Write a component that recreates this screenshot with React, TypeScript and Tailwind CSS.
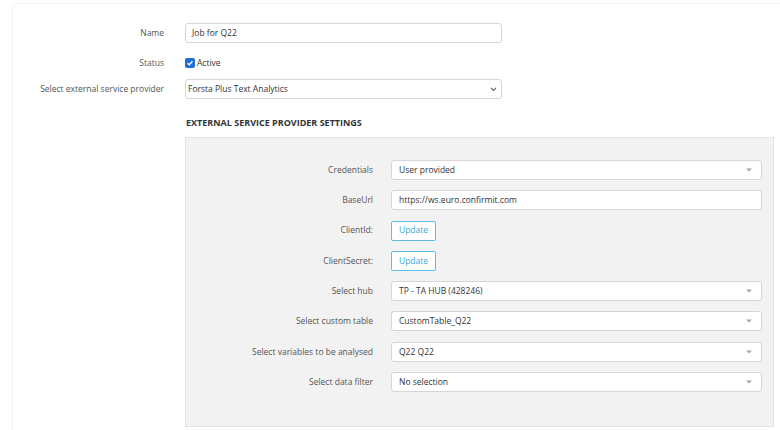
import React from "react";

const font = { fontFamily: '"Open Sans", "Noto Sans", sans-serif' };

function Caret() {
  return (
    <svg width="6" height="4" viewBox="0 0 6 4" className="shrink-0">
      <path d="M0 0.5 L6 0.5 L3 3.5 Z" fill="#a5a5a5" />
    </svg>
  );
}

function Chevron() {
  return (
    <svg width="7" height="5" viewBox="0 0 7 5" className="shrink-0">
      <path d="M1 1 L3.5 3.5 L6 1" fill="none" stroke="#666" strokeWidth="1.1" />
    </svg>
  );
}

function PanelRow({ label, children }: { label: string; children: React.ReactNode }) {
  return (
    <div className="flex items-center h-[20px]">
      <div className="w-[187px] text-right text-[8.5px] text-[#555] leading-none">{label}</div>
      <div className="ml-[18px] w-[371px] flex items-center">{children}</div>
    </div>
  );
}

function SelectBox({ value }: { value: string }) {
  return (
    <div className="w-full h-[20px] bg-white border border-[#d6d6d6] rounded-[3px] flex items-center justify-between pl-[7px] pr-[9px]">
      <span className="text-[8.5px] text-[#333] leading-none">{value}</span>
      <Caret />
    </div>
  );
}

function UpdateButton() {
  return (
    <button className="h-[20px] w-[45px] bg-white border border-[#5cbde6] rounded-[2px] text-[8.5px] text-[#3aa8de] leading-none">
      Update
    </button>
  );
}

export default function App() {
  return (
    <div className="w-[780px] h-[430px] bg-white overflow-hidden" style={font}>
      <div className="ml-[12px] mt-[3px] h-[427px] border-l border-t border-[#f1f1f1] rounded-tl-[6px]">
        {/* General settings */}
        <div className="pt-[19px]">
          <div className="flex items-center h-[20px]">
            <div className="w-[151px] text-right text-[8.5px] text-[#555] leading-none">Name</div>
            <div className="ml-[21px] w-[317px] h-[20px] border border-[#d6d6d6] rounded-[3px] flex items-center pl-[6px]">
              <span className="text-[8.5px] text-[#333] leading-none">Job for Q22</span>
            </div>
          </div>
          <div className="flex items-center h-[20px] mt-[10px]">
            <div className="w-[151px] text-right text-[8.5px] text-[#555] leading-none">Status</div>
            <div className="ml-[21px] flex items-center gap-[2px]">
              <span className="w-[10px] h-[10px] rounded-[2px] bg-[#1b6fd6] flex items-center justify-center">
                <svg width="8" height="8" viewBox="0 0 8 8">
                  <path d="M1.5 4.2 L3.2 5.8 L6.5 2.2" fill="none" stroke="white" strokeWidth="1.4" />
                </svg>
              </span>
              <span className="text-[8.5px] text-[#333] leading-none">Active</span>
            </div>
          </div>
          <div className="flex items-center h-[20px] mt-[6px]">
            <div className="w-[151px] text-right text-[8.5px] text-[#555] leading-none">Select external service provider</div>
            <div className="ml-[21px] w-[317px] h-[20px] border border-[#d6d6d6] rounded-[3px] flex items-center justify-between pl-[2px] pr-[4px]">
              <span className="text-[8.5px] text-[#333] leading-none">Forsta Plus Text Analytics</span>
              <Chevron />
            </div>
          </div>
        </div>

        {/* External service provider settings */}
        <div className="ml-[172px]">
          <h2 className="mt-[19px] ml-[1px] text-[9px] font-bold text-[#333] leading-none">
            EXTERNAL SERVICE PROVIDER SETTINGS
          </h2>
          <div className="mt-[10px] w-[589px] h-[290px] bg-[#f2f2f2] border border-[#e2e2e2] pt-[22px] flex flex-col gap-[10.3px]">
            <PanelRow label="Credentials">
              <SelectBox value="User provided" />
            </PanelRow>
            <PanelRow label="BaseUrl">
              <div className="w-full h-[20px] bg-white border border-[#d6d6d6] rounded-[3px] flex items-center pl-[7px]">
                <span className="text-[8.5px] text-[#333] leading-none">https://ws.euro.confirmit.com</span>
              </div>
            </PanelRow>
            <PanelRow label="ClientId:">
              <UpdateButton />
            </PanelRow>
            <PanelRow label="ClientSecret:">
              <UpdateButton />
            </PanelRow>
            <PanelRow label="Select hub">
              <SelectBox value="TP - TA HUB (428246)" />
            </PanelRow>
            <PanelRow label="Select custom table">
              <SelectBox value="CustomTable_Q22" />
            </PanelRow>
            <PanelRow label="Select variables to be analysed">
              <SelectBox value="Q22 Q22" />
            </PanelRow>
            <PanelRow label="Select data filter">
              <SelectBox value="No selection" />
            </PanelRow>
          </div>
        </div>
      </div>
    </div>
  );
}
